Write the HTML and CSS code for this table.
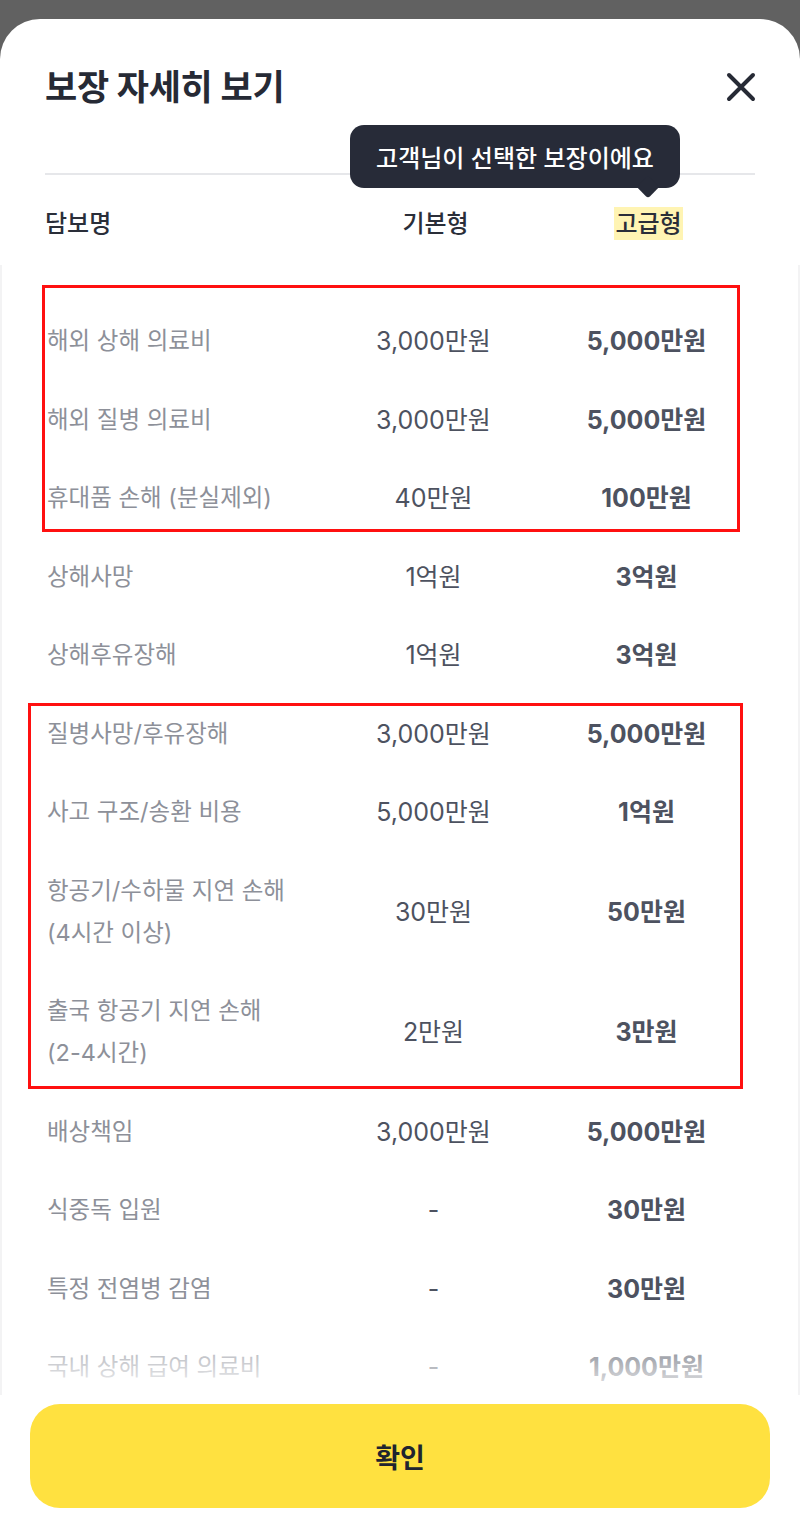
FILE: index.html
```html
<!DOCTYPE html>
<html lang="ko">
<head>
<meta charset="utf-8">
<link rel="stylesheet" href="styles.css">
</head>
<body>
<div class="sheet">
  <div class="head">
    <div class="title-row">
      <h1 class="title">보장 자세히 보기</h1>
      <button class="close" aria-label="닫기">
        <svg width="30" height="30" viewBox="0 0 30 30"><path d="M3 3 L27 27 M27 3 L3 27" stroke="#262a35" stroke-width="4" stroke-linecap="round"/></svg>
      </button>
    </div>
    <div class="divider"></div>
    <div class="grid col-head">
      <div class="c-label">담보명</div>
      <div class="c-val">기본형</div>
      <div class="c-val"><span class="mark">고급형</span></div>
    </div>
  </div>

  <div class="list">
    <div class="grid row"><div class="c-label">해외 상해 의료비</div><div class="c-val">3,000만원</div><div class="c-val b">5,000만원</div></div>
    <div class="grid row"><div class="c-label">해외 질병 의료비</div><div class="c-val">3,000만원</div><div class="c-val b">5,000만원</div></div>
    <div class="grid row"><div class="c-label">휴대품 손해 (분실제외)</div><div class="c-val">40만원</div><div class="c-val b">100만원</div></div>
    <div class="grid row"><div class="c-label">상해사망</div><div class="c-val">1억원</div><div class="c-val b">3억원</div></div>
    <div class="grid row"><div class="c-label">상해후유장해</div><div class="c-val">1억원</div><div class="c-val b">3억원</div></div>
    <div class="grid row"><div class="c-label">질병사망/후유장해</div><div class="c-val">3,000만원</div><div class="c-val b">5,000만원</div></div>
    <div class="grid row"><div class="c-label">사고 구조/송환 비용</div><div class="c-val">5,000만원</div><div class="c-val b">1억원</div></div>
    <div class="grid row"><div class="c-label">항공기/수하물 지연 손해<br>(4시간 이상)</div><div class="c-val">30만원</div><div class="c-val b">50만원</div></div>
    <div class="grid row"><div class="c-label">출국 항공기 지연 손해<br>(2-4시간)</div><div class="c-val">2만원</div><div class="c-val b">3만원</div></div>
    <div class="grid row"><div class="c-label">배상책임</div><div class="c-val">3,000만원</div><div class="c-val b">5,000만원</div></div>
    <div class="grid row"><div class="c-label">식중독 입원</div><div class="c-val">-</div><div class="c-val b">30만원</div></div>
    <div class="grid row"><div class="c-label">특정 전염병 감염</div><div class="c-val">-</div><div class="c-val b">30만원</div></div>
    <div class="grid row"><div class="c-label">국내 상해 급여 의료비</div><div class="c-val">-</div><div class="c-val b">1,000만원</div></div>
    <div class="fade"></div>
  </div>

  <div class="foot">
    <button class="confirm">확인</button>
  </div>

  <div class="tooltip">고객님이 선택한 보장이에요</div>
  <div class="annot annot-1"></div>
  <div class="annot annot-2"></div>
</div>
</body>
</html>
```

FILE: styles.css
```css
* { box-sizing: border-box; }
html, body { margin: 0; padding: 0; }
body {
  width: 800px;
  height: 1536px;
  overflow: hidden;
  background: #616161;
  font-family: Inter, "Noto Sans CJK KR", sans-serif;
}
.sheet {
  position: relative;
  margin-top: 19px;
  height: 1517px;
  background: #ffffff;
  border-radius: 40px 40px 0 0;
  display: flex;
  flex-direction: column;
}
.head {
  height: 246px;
  padding: 0 45px;
  flex: none;
}
.title-row {
  padding-top: 48px;
  display: flex;
  align-items: center;
  justify-content: space-between;
  height: 88px;
}
.title {
  margin: 0;
  font-size: 35px;
  line-height: 40px;
  font-weight: 700;
  color: #262a35;
  letter-spacing: -0.3px;
}
.close {
  border: 0;
  background: none;
  padding: 0;
  margin-right: -1px;
  width: 30px;
  height: 30px;
  display: flex;
}
.divider {
  margin-top: 66px;
  height: 2px;
  background: #e6e7ea;
}
.grid {
  display: grid;
  grid-template-columns: 1fr 213px 213px;
  align-items: center;
}
.col-head {
  margin-top: 32px;
  font-size: 24px;
  line-height: 33px;
  font-weight: 500;
  color: #2a2e39;
}
.c-val { text-align: center; }
.mark {
  background: #fff4b3;
  display: inline-block;
  padding: 0 1px;
}
.list {
  position: relative;
  flex: 1;
  overflow: hidden;
  padding: 37px 45px 0;
  border-left: 2px solid #f3f3f4;
  border-right: 2px solid #f3f3f4;
}
.row {
  padding: 18.25px 0;
  font-size: 23.5px;
  line-height: 42px;
}
.row .c-label { color: #8d9099; }
.row .c-val { color: #4d5260; font-size: 25px; }
.row .c-val.b { font-weight: 700; }
.fade {
  position: absolute;
  left: 0;
  right: 0;
  bottom: 0;
  height: 80px;
  background: linear-gradient(to bottom, rgba(255,255,255,0), rgba(255,255,255,0.92));
  pointer-events: none;
}
.foot {
  flex: none;
  padding: 9px 30px 28px;
}
.confirm {
  display: block;
  width: 100%;
  height: 104px;
  border: 0;
  border-radius: 30px;
  background: #ffe140;
  font-family: Inter, "Noto Sans CJK KR", sans-serif;
  font-size: 27px;
  font-weight: 700;
  color: #20242f;
}
.tooltip {
  position: absolute;
  left: 350px;
  top: 106px;
  width: 330px;
  height: 63px;
  border-radius: 14px;
  background: #272b38;
  color: #ffffff;
  font-size: 24px;
  font-weight: 500;
  display: flex;
  align-items: center;
  justify-content: center;
}
.tooltip::after {
  content: "";
  position: absolute;
  left: 290px;
  bottom: -7px;
  width: 16px;
  height: 16px;
  background: #272b38;
  border-radius: 3px;
  transform: rotate(45deg);
}
.annot {
  position: absolute;
  border: 3px solid #ff1010;
}
.annot-1 { left: 42px; top: 266px; width: 698px; height: 247px; }
.annot-2 { left: 28px; top: 684px; width: 715px; height: 386px; }
```
